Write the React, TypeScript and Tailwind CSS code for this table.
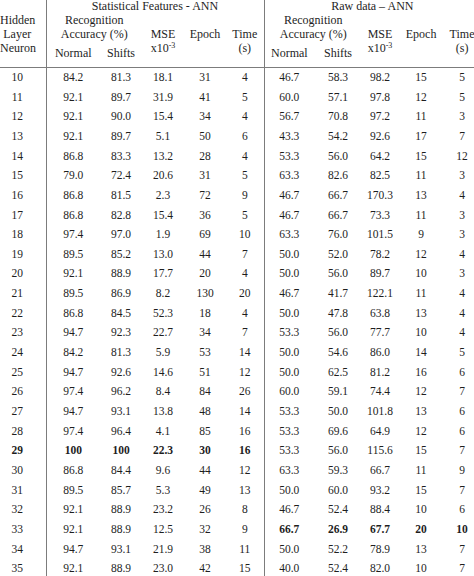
const rows: { n: number; stat: string[]; raw: string[]; boldStat?: boolean; boldRaw?: boolean }[] = [
  { n: 10, stat: ["84.2", "81.3", "18.1", "31", "4"], raw: ["46.7", "58.3", "98.2", "15", "5"] },
  { n: 11, stat: ["92.1", "89.7", "31.9", "41", "5"], raw: ["60.0", "57.1", "97.8", "12", "5"] },
  { n: 12, stat: ["92.1", "90.0", "15.4", "34", "4"], raw: ["56.7", "70.8", "97.2", "11", "3"] },
  { n: 13, stat: ["92.1", "89.7", "5.1", "50", "6"], raw: ["43.3", "54.2", "92.6", "17", "7"] },
  { n: 14, stat: ["86.8", "83.3", "13.2", "28", "4"], raw: ["53.3", "56.0", "64.2", "15", "12"] },
  { n: 15, stat: ["79.0", "72.4", "20.6", "31", "5"], raw: ["63.3", "82.6", "82.5", "11", "3"] },
  { n: 16, stat: ["86.8", "81.5", "2.3", "72", "9"], raw: ["46.7", "66.7", "170.3", "13", "4"] },
  { n: 17, stat: ["86.8", "82.8", "15.4", "36", "5"], raw: ["46.7", "66.7", "73.3", "11", "3"] },
  { n: 18, stat: ["97.4", "97.0", "1.9", "69", "10"], raw: ["63.3", "76.0", "101.5", "9", "3"] },
  { n: 19, stat: ["89.5", "85.2", "13.0", "44", "7"], raw: ["50.0", "52.0", "78.2", "12", "4"] },
  { n: 20, stat: ["92.1", "88.9", "17.7", "20", "4"], raw: ["50.0", "56.0", "89.7", "10", "3"] },
  { n: 21, stat: ["89.5", "86.9", "8.2", "130", "20"], raw: ["46.7", "41.7", "122.1", "11", "4"] },
  { n: 22, stat: ["86.8", "84.5", "52.3", "18", "4"], raw: ["50.0", "47.8", "63.8", "13", "4"] },
  { n: 23, stat: ["94.7", "92.3", "22.7", "34", "7"], raw: ["53.3", "56.0", "77.7", "10", "4"] },
  { n: 24, stat: ["84.2", "81.3", "5.9", "53", "14"], raw: ["50.0", "54.6", "86.0", "14", "5"] },
  { n: 25, stat: ["94.7", "92.6", "14.6", "51", "12"], raw: ["50.0", "62.5", "81.2", "16", "6"] },
  { n: 26, stat: ["97.4", "96.2", "8.4", "84", "26"], raw: ["60.0", "59.1", "74.4", "12", "7"] },
  { n: 27, stat: ["94.7", "93.1", "13.8", "48", "14"], raw: ["53.3", "50.0", "101.8", "13", "6"] },
  { n: 28, stat: ["97.4", "96.4", "4.1", "85", "16"], raw: ["53.3", "69.6", "64.9", "12", "6"] },
  { n: 29, stat: ["100", "100", "22.3", "30", "16"], raw: ["53.3", "56.0", "115.6", "15", "7"], boldStat: true },
  { n: 30, stat: ["86.8", "84.4", "9.6", "44", "12"], raw: ["63.3", "59.3", "66.7", "11", "9"] },
  { n: 31, stat: ["89.5", "85.7", "5.3", "49", "13"], raw: ["50.0", "60.0", "93.2", "15", "7"] },
  { n: 32, stat: ["92.1", "88.9", "23.2", "26", "8"], raw: ["46.7", "52.4", "88.4", "10", "6"] },
  { n: 33, stat: ["92.1", "88.9", "12.5", "32", "9"], raw: ["66.7", "26.9", "67.7", "20", "10"], boldRaw: true },
  { n: 34, stat: ["94.7", "93.1", "21.9", "38", "11"], raw: ["50.0", "52.2", "78.9", "13", "7"] },
  { n: 35, stat: ["92.1", "88.9", "23.0", "42", "15"], raw: ["40.0", "52.4", "82.0", "10", "7"] },
];

function SubHeads({ last }: { last?: boolean }) {
  return (
    <>
      <th colSpan={2} className="h-[28px] p-0 text-center font-normal leading-[14px]">
        Recognition<br />Accuracy (%)
      </th>
      <th rowSpan={2} className="p-0 pt-[14px] align-top text-center font-normal leading-[14px]">
        MSE<br />x10<sup className="text-[8px]">-3</sup>
      </th>
      <th rowSpan={2} className="p-0 pt-[14px] align-top text-center font-normal leading-[14px]">Epoch</th>
      <th
        rowSpan={2}
        className={`p-0 pt-[14px] align-top text-center font-normal leading-[14px] whitespace-nowrap ${last ? "" : "border-r border-[#7c7c7c]"}`}
      >
        Time<br />(s)
      </th>
    </>
  );
}

export default function App() {
  return (
    <div className="w-[474px] h-[576px] overflow-hidden bg-white text-[#1e1e1e] font-['Liberation_Serif',serif]">
      <table className="w-[480px] table-fixed border-collapse">
        <colgroup>
          <col className="w-[46px]" />
          <col className="w-[54px]" />
          <col className="w-[42px]" />
          <col className="w-[42px]" />
          <col className="w-[42px]" />
          <col className="w-[38px]" />
          <col className="w-[50px]" />
          <col className="w-[48px]" />
          <col className="w-[36px]" />
          <col className="w-[46px]" />
          <col className="w-[36px]" />
        </colgroup>

        {/* Header */}
        <thead className="text-[12px] border-b border-[#7c7c7c]">
          <tr>
            <th rowSpan={3} className="p-0 pt-[13px] pr-[11px] align-top text-center font-normal leading-[14px] border-r border-[#7c7c7c]">
              Hidden<br />Layer<br />Neuron
            </th>
            <th colSpan={5} className="h-[13px] p-0 text-center font-normal leading-[13px] border-r border-[#7c7c7c]">
              Statistical Features - ANN
            </th>
            <th colSpan={5} className="h-[13px] p-0 text-center font-normal leading-[13px]">
              Raw data – ANN
            </th>
          </tr>
          <tr>
            <SubHeads />
            <SubHeads last />
          </tr>
          <tr>
            <th className="h-[26px] p-0 pb-[2px] text-center font-normal">Normal</th>
            <th className="h-[26px] p-0 pb-[2px] text-center font-normal">Shifts</th>
            <th className="h-[26px] p-0 pb-[2px] text-center font-normal">Normal</th>
            <th className="h-[26px] p-0 pb-[2px] text-center font-normal">Shifts</th>
          </tr>
        </thead>

        {/* Body */}
        <tbody className="text-[11.5px]">
          {rows.map((r, i) => (
            <tr key={r.n}>
              <td className={`${i === 0 ? "h-[20.5px] pt-[1px]" : "h-[19.66px]"} p-0 pr-[11px] text-center leading-none border-r border-[#7c7c7c] ${r.boldStat ? "font-bold" : ""}`}>
                {r.n}
              </td>
              {r.stat.map((v, j) => (
                <td
                  key={j}
                  className={`p-0 text-center leading-none ${j === 4 ? "border-r border-[#7c7c7c]" : ""} ${r.boldStat ? "font-bold" : ""} ${i === 0 ? "pt-[1px]" : ""}`}
                >
                  {v}
                </td>
              ))}
              {r.raw.map((v, j) => (
                <td key={j} className={`p-0 text-center leading-none whitespace-nowrap ${r.boldRaw ? "font-bold" : ""} ${i === 0 ? "pt-[1px]" : ""}`}>
                  {v}
                </td>
              ))}
            </tr>
          ))}
        </tbody>
      </table>
    </div>
  );
}
